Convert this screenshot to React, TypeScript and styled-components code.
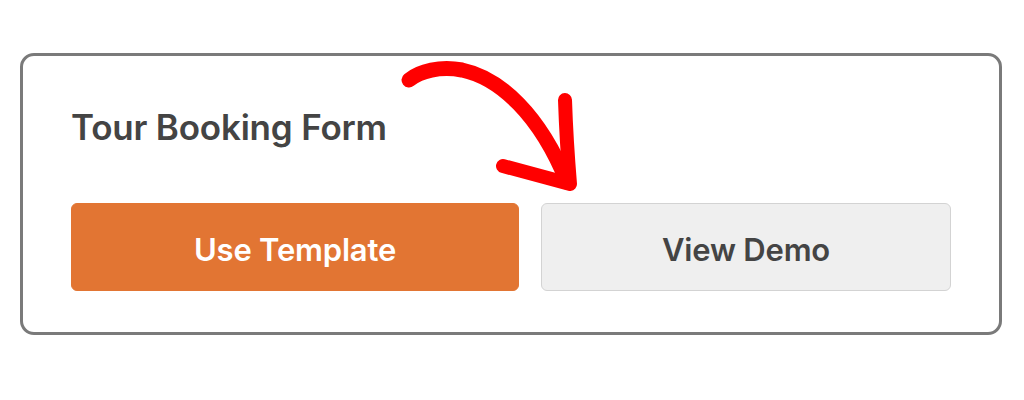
import React from "react";
import styled, { createGlobalStyle } from "styled-components";

const Global = createGlobalStyle`
  html, body { margin: 0; padding: 0; background: #ffffff; }
  body { font-family: Inter, "Noto Sans", "Liberation Sans", sans-serif; }
`;

const Page = styled.div`
  position: relative;
  width: 1024px;
  height: 400px;
  padding: 53px 0 0 20px;
  box-sizing: border-box;
`;

const Card = styled.div`
  box-sizing: border-box;
  width: 982px;
  height: 282px;
  border: 3px solid #7a7a7a;
  border-radius: 14px;
  padding: 49px 48px 41px 48px;
  display: flex;
  flex-direction: column;
  justify-content: space-between;
`;

const Title = styled.h2`
  margin: 0;
  font-size: 35px;
  line-height: 44px;
  font-weight: 600;
  color: #444444;
  letter-spacing: -0.2px;
`;

const Actions = styled.div`
  display: flex;
  gap: 22px;
`;

const Button = styled.button<{ $primary?: boolean; $width: number }>`
  box-sizing: border-box;
  width: ${(p) => p.$width}px;
  height: 88px;
  border-radius: 6px;
  border: 1px solid ${(p) => (p.$primary ? "#e27533" : "#d3d3d3")};
  background: ${(p) => (p.$primary ? "#e27533" : "#efefef")};
  color: ${(p) => (p.$primary ? "#ffffff" : "#444444")};
  font-family: Inter, "Noto Sans", "Liberation Sans", sans-serif;
  font-size: 31px;
  font-weight: 600;
  letter-spacing: -0.2px;
  display: flex;
  align-items: center;
  justify-content: center;
  padding: 4px 0 0 0;
  cursor: pointer;
`;

const Arrow = styled.svg`
  position: absolute;
  left: 0;
  top: 0;
  pointer-events: none;
`;

export default function App() {
  return (
    <>
      <Global />
      <Page>
        <Card>
          <Title>Tour Booking Form</Title>
          <Actions>
            <Button $primary $width={448}>Use Template</Button>
            <Button $width={410}>View Demo</Button>
          </Actions>
        </Card>
        <Arrow width="1024" height="400" viewBox="0 0 1024 400">
          <path
            d="M409 80 C 420 71, 440 66, 462 70 C 500 78, 540 115, 567 182"
            fill="none"
            stroke="#ff0000"
            strokeWidth="15"
            strokeLinecap="round"
            strokeLinejoin="round"
          />
          <path
            d="M565 100 C 566 130, 568 160, 570 184 L 503 166"
            fill="none"
            stroke="#ff0000"
            strokeWidth="14"
            strokeLinecap="round"
            strokeLinejoin="round"
          />
        </Arrow>
      </Page>
    </>
  );
}
